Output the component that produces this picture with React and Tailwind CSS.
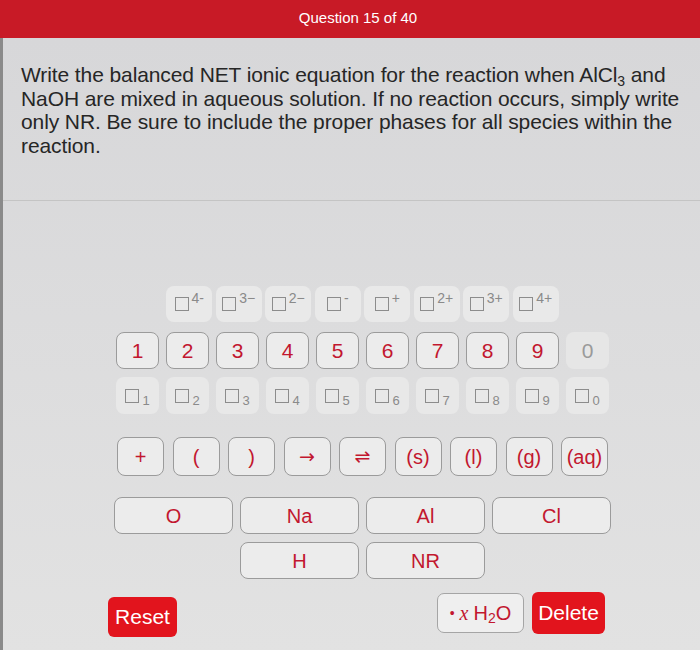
import React from "react";

const F = { fontFamily: '"Liberation Sans", Arial, sans-serif' };

function Sq({ size = 13 }) {
  return (
    <span
      className="inline-block border-[1.5px] border-[#8c8c8c] bg-transparent"
      style={{ width: size, height: size }}
    />
  );
}

function ChargeBtn({ label }) {
  return (
    <div className="w-[46px] h-[36px] rounded-[8px] bg-[#e9e9e9] flex items-center justify-center">
      <div className="flex items-center">
        <Sq size={14} />
        <span className="relative top-[-6px] text-[14px] leading-none text-[#8a8a8a] ml-[3px]">{label}</span>
      </div>
    </div>
  );
}

function NumBtn({ n, disabled }) {
  return (
    <div
      className={
        "w-[43px] h-[37px] rounded-[8px] flex items-center justify-center text-[21px] " +
        (disabled
          ? "bg-[#e6e6e6] text-[#9a9a9a]"
          : "bg-[#ececec] border border-[#9b9b9b] text-[#c2172f]")
      }
    >
      {n}
    </div>
  );
}

function SubBtn({ n }) {
  return (
    <div className="w-[43px] h-[37px] rounded-[8px] bg-[#e8e8e8] flex items-center justify-center">
      <div className="flex items-center">
        <Sq size={14} />
        <span className="relative top-[5px] text-[13px] leading-none text-[#8a8a8a] ml-[3px]">{n}</span>
      </div>
    </div>
  );
}

function SymBtn({ children, cls = "text-[20px]" }) {
  return (
    <div className={"w-[47px] h-[39px] rounded-[8px] bg-[#ececec] border border-[#9b9b9b] flex items-center justify-center text-[#c2172f] " + cls}>
      {children}
    </div>
  );
}

function ElBtn({ children }) {
  return (
    <div className="w-[119px] h-[37px] rounded-[8px] bg-[#ececec] border border-[#9b9b9b] flex items-center justify-center text-[20px] text-[#c2172f]">
      {children}
    </div>
  );
}

export default function App() {
  const charges = ["4-", "3\u2212", "2\u2212", "-", "+", "2+", "3+", "4+"];
  const nums = ["1", "2", "3", "4", "5", "6", "7", "8", "9", "0"];
  const D = { fontFamily: '"DejaVu Sans", sans-serif' };
  return (
    <div style={F} className="w-[700px] h-[650px] bg-[#dedede] flex flex-col overflow-hidden">
      <div className="h-[38px] bg-[#c81a26] flex items-center justify-center pl-[16px] pb-[2px] shrink-0">
        <span className="text-white text-[15px]">Question 15 of 40</span>
      </div>
      <div className="flex-1 flex flex-col border-l-[3px] border-[#8a8a8a] bg-gradient-to-b from-[#d7d7d9] to-[#e2e2e2]">
        <div className="h-[163px] border-b border-[#c4c4c4] px-[18px] pt-[25px]">
          <p className="text-[21px] leading-[23.5px] text-[#262626] tracking-[-0.1px] whitespace-nowrap">
            Write the balanced NET ionic equation for the reaction when AlCl
            <span className="text-[14px] leading-none relative top-[4px]">3</span> and
            <br />
            NaOH are mixed in aqueous solution. If no reaction occurs, simply write
            <br />
            only NR. Be sure to include the proper phases for all species within the
            <br />
            reaction.
          </p>
        </div>
        <div className="flex flex-col items-center pl-[22px] pt-[85px]">
          <div className="flex gap-[3.5px]">
            {charges.map((c) => (
              <ChargeBtn key={c} label={c} />
            ))}
          </div>
          <div className="flex gap-[7px] mt-[10px]">
            {nums.map((n) => (
              <NumBtn key={n} n={n} disabled={n === "0"} />
            ))}
          </div>
          <div className="flex gap-[7px] mt-[8px]">
            {nums.map((n) => (
              <SubBtn key={n} n={n} />
            ))}
          </div>
          <div className="flex gap-[8.5px] mt-[23px]">
            <SymBtn>+</SymBtn>
            <SymBtn>(</SymBtn>
            <SymBtn>)</SymBtn>
            <SymBtn cls="text-[19px]"><span style={D}>→</span></SymBtn>
            <SymBtn cls="text-[19px]"><span style={D}>⇌</span></SymBtn>
            <SymBtn cls="text-[20px]">(s)</SymBtn>
            <SymBtn cls="text-[20px]">(l)</SymBtn>
            <SymBtn cls="text-[20px]">(g)</SymBtn>
            <SymBtn cls="text-[20px]">(aq)</SymBtn>
          </div>
          <div className="flex gap-[7px] mt-[21px]">
            <ElBtn>O</ElBtn>
            <ElBtn>Na</ElBtn>
            <ElBtn>Al</ElBtn>
            <ElBtn>Cl</ElBtn>
          </div>
          <div className="flex gap-[7px] mt-[8px]">
            <ElBtn>H</ElBtn>
            <ElBtn>NR</ElBtn>
          </div>
        </div>
        <div className="flex items-center mt-[10px] px-[105px] pr-[95px]">
          <div className="w-[69px] h-[40px] rounded-[6px] bg-[#e2141d] text-white text-[21px] flex items-center justify-center mt-[8px]">
            Reset
          </div>
          <div className="flex-1" />
          <div className="w-[87px] h-[40px] rounded-[7px] bg-[#efefef] border border-[#a5a5a5] flex items-center justify-center text-[#c2172f] text-[20px]">
            <span className="text-[14px] mr-[5px]">•</span>
            <span className="italic mr-[5px]" style={{ fontFamily: '"Liberation Serif", serif' }}>x</span>
            <span>H</span>
            <span className="text-[14px] relative top-[5px]">2</span>
            <span>O</span>
          </div>
          <div className="w-[73px] h-[42px] rounded-[6px] bg-[#e2141d] text-white text-[21px] flex items-center justify-center ml-[8px]">
            Delete
          </div>
        </div>
      </div>
    </div>
  );
}
